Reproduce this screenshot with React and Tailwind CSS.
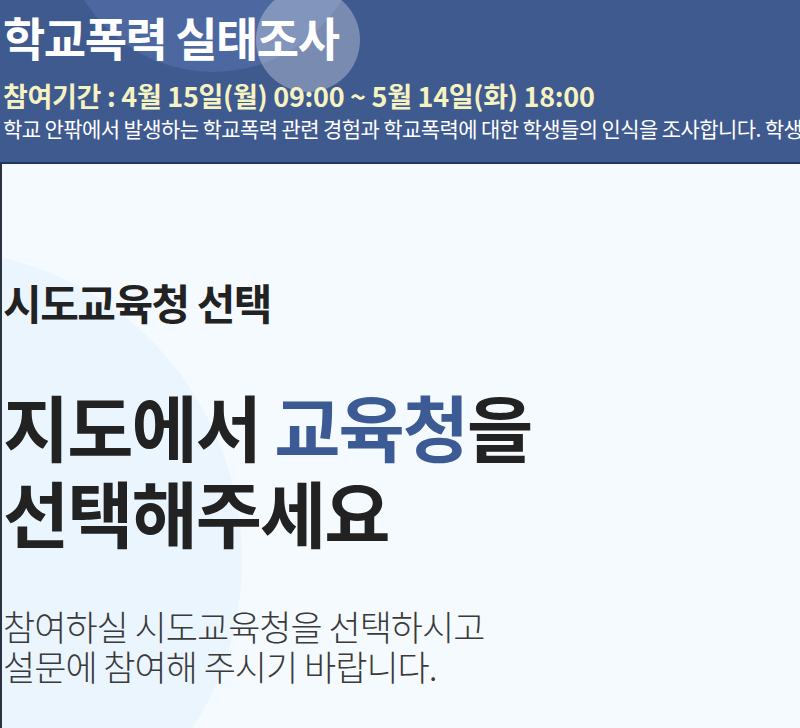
export default function App() {
  return (
    <div
      className="min-h-screen w-[800px] overflow-hidden bg-[#f5faff]"
      style={{ fontFamily: '"Noto Sans CJK KR", "Noto Sans", sans-serif' }}
    >
      {/* Top banner */}
      <header className="relative h-[164px] overflow-hidden border-b-2 border-[#1f3566] bg-[#3f5a8f]">
        <div className="absolute left-[62px] top-[-230px] h-[302px] w-[302px] rounded-full bg-[#4d68a0]" />
        <div className="absolute left-[256px] top-[-12px] h-[104px] w-[104px] rounded-full bg-white/30" />

        <div className="relative pl-[3px] pt-[6px]">
          <h1 className="text-[46px] font-bold leading-[60px] tracking-[-1.5px] text-white">
            학교폭력 실태조사
          </h1>
          <p className="mt-[14px] whitespace-nowrap text-[27px] font-bold leading-[32px] tracking-[-0.3px] text-[#f6f3c2]">
            참여기간 : 4월 15일(월) 09:00 ~ 5월 14일(화) 18:00
          </p>
          <p className="overflow-hidden whitespace-nowrap text-[21px] leading-[32px] tracking-[-0.6px] text-white">
            학교 안팎에서 발생하는 학교폭력 관련 경험과 학교폭력에 대한 학생들의 인식을 조사합니다. 학생
          </p>
        </div>
      </header>

      {/* Region picker intro */}
      <section className="relative h-[564px] overflow-hidden border-l-2 border-[#2b3240]">
        <div className="absolute left-[-382px] top-[85px] h-[622px] w-[622px] rounded-full bg-[#eaf5fe]" />

        <div className="relative pl-[1px] pt-[113px] text-[#222]">
          <h2 className="text-[42px] font-bold leading-[50px] tracking-[-1.5px]">
            시도교육청 선택
          </h2>
          <h3 className="mt-[55px] text-[72px] font-bold leading-[86px] tracking-[-2px]">
            지도에서 <span className="text-[#3c5a94]">교육청</span>을
            <br />
            선택해주세요
          </h3>
          <p className="mt-[52px] text-[35px] font-light leading-[40px] tracking-[-1px] text-[#3a3a3a]">
            참여하실 시도교육청을 선택하시고
            <br />
            설문에 참여해 주시기 바랍니다.
          </p>
        </div>
      </section>
    </div>
  );
}
